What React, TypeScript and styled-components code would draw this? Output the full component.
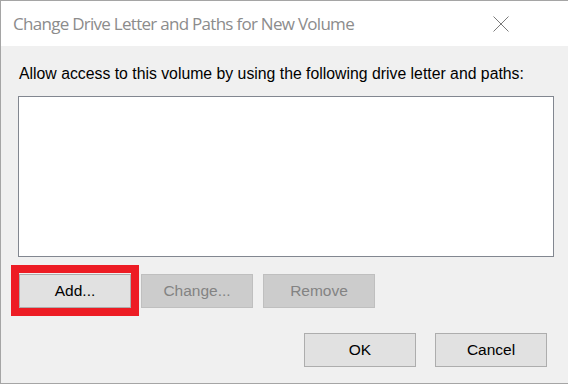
import styled, { createGlobalStyle } from 'styled-components';

const GlobalStyle = createGlobalStyle`
  html, body {
    margin: 0;
    padding: 0;
    background: #f0f0f0;
  }
  * {
    box-sizing: border-box;
  }
`;

const App = () => {
  return (
    <>
      <GlobalStyle />
      <Window>
        <TitleBar>
          <Title>Change Drive Letter and Paths for New Volume</Title>
          <CloseButton aria-label="Close">
            <svg width="16" height="16" viewBox="0 0 16 16">
              <path d="M0.5 0.5 L15.5 15.5 M15.5 0.5 L0.5 15.5" stroke="#7a7a7a" strokeWidth="1" fill="none" />
            </svg>
          </CloseButton>
        </TitleBar>

        <Body>
          <Label>Allow access to this volume by using the following drive letter and paths:</Label>
          <ListBox />

          <ActionRow>
            <Highlighted>
              <DialogButton>Add...</DialogButton>
            </Highlighted>
            <DialogButton disabled>Change...</DialogButton>
            <DialogButton disabled>Remove</DialogButton>
          </ActionRow>

          <FooterRow>
            <DialogButton>OK</DialogButton>
            <DialogButton>Cancel</DialogButton>
          </FooterRow>
        </Body>
      </Window>
    </>
  );
};

const Window = styled.div`
  width: 568px;
  height: 384px;
  background: #f0f0f0;
  border-top: 1px solid #a5a5a5;
  border-left: 1px solid #a5a5a5;
  border-bottom: 1px solid #a5a5a5;
  display: flex;
  flex-direction: column;
  overflow: hidden;
`;

const TitleBar = styled.div`
  height: 45px;
  flex-shrink: 0;
  background: #ffffff;
  display: flex;
  align-items: center;
  justify-content: space-between;
  padding-left: 12px;
  padding-right: 59px;
`;

const Title = styled.div`
  font-family: 'Open Sans', 'Noto Sans', sans-serif;
  font-size: 17px;
  letter-spacing: -0.72px;
  color: #8c8c8c;
  padding-bottom: 1px;
`;

const CloseButton = styled.div`
  width: 16px;
  height: 16px;
  display: flex;
`;

const Body = styled.div`
  flex: 1;
  display: flex;
  flex-direction: column;
  padding: 19px 0 0 17px;
  font-family: 'Liberation Sans', Arial, sans-serif;
  font-size: 15.8px;
  color: #000000;
`;

const Label = styled.div`
  line-height: 17px;
  margin-left: 1px;
`;

const ListBox = styled.div`
  margin-top: 14px;
  width: 536px;
  height: 161px;
  background: #ffffff;
  border: 1px solid #828790;
`;

const ActionRow = styled.div`
  margin-top: 17px;
  display: flex;
  gap: 10px;
  padding-left: 1px;
`;

const Highlighted = styled.div`
  position: relative;
  display: flex;

  &::before {
    content: '';
    position: absolute;
    left: -8px;
    top: -9px;
    right: -8px;
    bottom: -8px;
    border: 8px solid #ed1c24;
    pointer-events: none;
  }
`;

const FooterRow = styled.div`
  margin-top: 25px;
  display: flex;
  justify-content: flex-end;
  gap: 19px;
  padding-right: 21px;
`;

const DialogButton = styled.button`
  width: 112px;
  height: 34px;
  padding: 0;
  font-family: 'Liberation Sans', Arial, sans-serif;
  font-size: 15.5px;
  color: #000000;
  background: #e1e1e1;
  border: 1px solid #adadad;
  border-radius: 0;
  outline: none;

  &:disabled {
    background: #cccccc;
    border-color: #bfbfbf;
    color: #838383;
  }
`;

export default App;
